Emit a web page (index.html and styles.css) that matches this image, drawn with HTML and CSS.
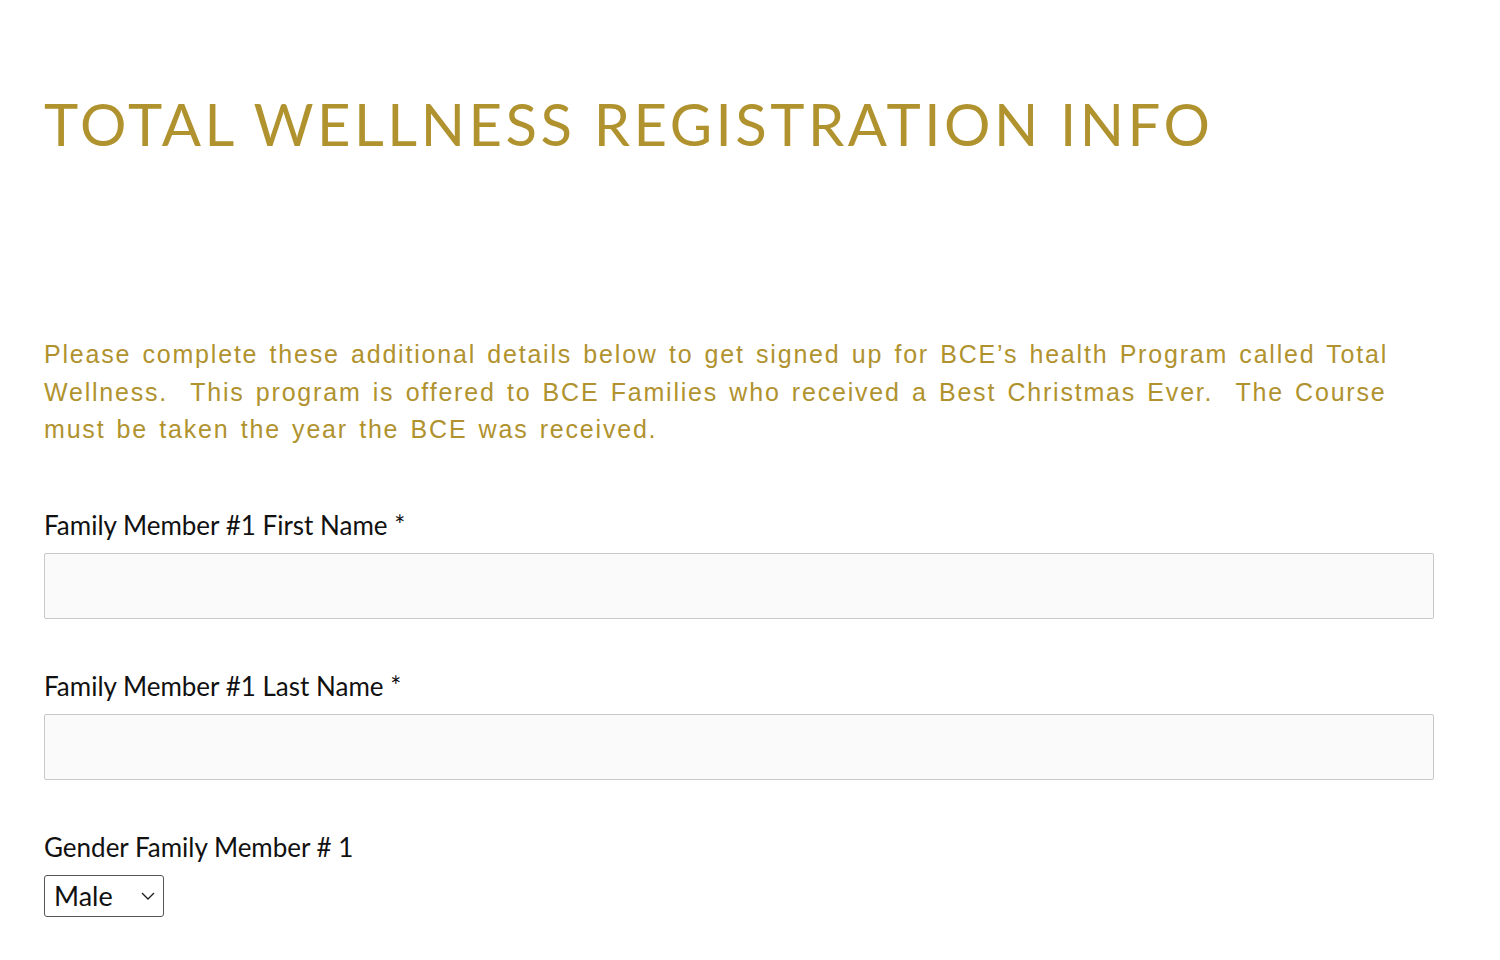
FILE: index.html
```html
<!DOCTYPE html>
<html>
<head>
<meta charset="utf-8">
<link rel="stylesheet" href="styles.css">
</head>
<body>
<div class="page">
  <h1 class="title">TOTAL WELLNESS REGISTRATION INFO</h1>
  <p class="intro">Please complete these additional details below to get signed up for BCE’s health Program called Total Wellness.&nbsp; This program is offered to BCE Families who received a Best Christmas Ever.&nbsp; The Course must be taken the year the BCE was received.</p>
  <form class="form">
    <div class="field">
      <label class="label">Family Member #1 First Name *</label>
      <input class="text-input" type="text">
    </div>
    <div class="field">
      <label class="label">Family Member #1 Last Name *</label>
      <input class="text-input" type="text">
    </div>
    <div class="field">
      <label class="label">Gender Family Member # 1</label>
      <div class="select">
        <span class="select-value">Male</span>
        <svg class="chev" width="14" height="8" viewBox="0 0 14 8"><path d="M1 1l6 6 6-6" fill="none" stroke="#222" stroke-width="1.4"/></svg>
      </div>
    </div>
  </form>
</div>
</body>
</html>
```
FILE: styles.css
```css
html, body { margin: 0; padding: 0; background: #fff; }
.page { padding: 95px 66px 0 44px; }
.title {
  margin: 0;
  font-family: Lato, "Noto Sans", sans-serif;
  font-weight: 400;
  font-size: 58px;
  line-height: 58px;
  letter-spacing: 3.5px;
  color: #b0922e;
  white-space: nowrap;
}
.intro {
  margin: 183px 0 0 0;
  width: 1370px;
  font-family: "Liberation Sans", Arial, sans-serif;
  font-size: 25px;
  line-height: 37.5px;
  letter-spacing: 1.8px;
  word-spacing: 2.5px;
  color: #b0922e;
}
.form { margin-top: 60px; display: flex; flex-direction: column; gap: 51px; }
.field { display: flex; flex-direction: column; gap: 14px; }
.label {
  font-family: Lato, "Noto Sans", sans-serif;
  font-size: 26px;
  line-height: 30px;
  padding-top: 1px;
  margin-bottom: -1px;
  color: #111;
}
.text-input {
  box-sizing: border-box;
  width: 1390px;
  height: 66px;
  border: 1.5px solid #c8c8c8;
  border-radius: 2px;
  background: #fafafa;
  margin: 0;
}
.select {
  box-sizing: border-box;
  width: 120px;
  height: 42px;
  border: 1px solid #555;
  border-radius: 3px;
  display: flex;
  align-items: center;
  justify-content: space-between;
  padding: 0 8px 0 9px;
  font-family: Lato, "Noto Sans", sans-serif;
  font-size: 27px;
  color: #111;
}
```
